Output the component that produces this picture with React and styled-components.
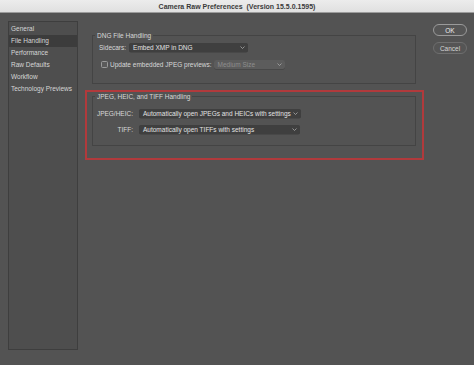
import { styled, createGlobalStyle } from "styled-components";

const GlobalStyle = createGlobalStyle`
  html, body {
    margin: 0;
    padding: 0;
    background: #535353;
  }
  * {
    box-sizing: border-box;
  }
`;

const Window = styled.div`
  width: 474px;
  height: 365px;
  background: #535353;
  font-family: "Liberation Sans", Arial, sans-serif;
  font-size: 6.5px;
  color: #dcdcdc;
  overflow: hidden;
`;

const TitleBar = styled.div`
  height: 13px;
  background: linear-gradient(#ececec, #e0e0e0);
  border-bottom: 1px solid #9c9c9c;
  display: flex;
  align-items: center;
  justify-content: center;
  font-size: 7px;
  font-weight: bold;
  color: #3a3a3a;
  white-space: pre;
`;

const Body = styled.div`
  display: flex;
  padding: 8px 7px 0 8px;
`;

const Sidebar = styled.div`
  width: 70px;
  height: 329px;
  background: #4e4e4e;
  border: 1px solid #3e3e3e;
  padding-top: 1px;
`;

const NavItem = styled.div`
  height: 12px;
  line-height: 12px;
  padding-left: 2px;
  color: #d6d6d6;
  background: ${(p) => (p.$active ? "#3c3c3c" : "transparent")};
  white-space: nowrap;
`;

const Content = styled.div`
  width: 324px;
  margin-left: 14px;
  padding-top: 10px;
`;

const Group = styled.fieldset`
  margin: 0;
  padding: 0 0 ${(p) => p.$bottom}px 0;
  border: 1px solid #444444;
  min-width: 0;
`;

const Legend = styled.legend`
  margin-left: 2px;
  padding: 0 2px;
  line-height: 9px;
  color: #d8d8d8;
`;

const Row = styled.div`
  display: flex;
  align-items: center;
  height: ${(p) => p.$h || 16}px;
  padding-left: ${(p) => p.$indent || 0}px;
  gap: ${(p) => p.$gap || 3}px;
`;

const Label = styled.span`
  color: #d8d8d8;
  white-space: nowrap;
`;

const Select = styled.div`
  width: ${(p) => p.$w}px;
  height: 9px;
  border-radius: 2px;
  background: ${(p) => (p.$disabled ? "#5c5c5c" : "#3f3f3f")};
  color: ${(p) => (p.$disabled ? "#8e8e8e" : "#e2e2e2")};
  display: flex;
  align-items: center;
  justify-content: space-between;
  padding: 0 3px 0 4px;
  white-space: nowrap;
  box-shadow: 0 0.5px 0 rgba(0, 0, 0, 0.25);
`;

const Checkbox = styled.span`
  width: 7px;
  height: 7px;
  border: 1px solid #9a9a9a;
  border-radius: 1.5px;
  background: #5a5a5a;
  flex: none;
`;

const Highlight = styled.div`
  margin: 6px -8px 0 -7px;
  padding: 0 6px 12px 5px;
  border: 2px solid #b13a3c;
`;

const FormGrid = styled.div`
  display: grid;
  grid-template-columns: 40px auto;
  column-gap: 6px;
  align-items: center;
  grid-auto-rows: 16px;
  padding-top: 4px;
  padding-bottom: 8px;
  justify-items: start;

  & > span {
    justify-self: end;
  }
`;

const Buttons = styled.div`
  display: flex;
  flex-direction: column;
  gap: 6px;
  margin-left: 17px;
  padding-top: 3px;
`;

const Button = styled.div`
  width: 34px;
  height: 12px;
  border-radius: 6px;
  border: 1px solid ${(p) => (p.$primary ? "#9a9a9a" : "#6e6e6e")};
  background: ${(p) => (p.$primary ? "#565656" : "#555555")};
  color: ${(p) => (p.$primary ? "#ececec" : "#d4d4d4")};
  display: flex;
  align-items: center;
  justify-content: center;
  font-size: 6.5px;
`;

const Chevron = () => (
  <svg width="5" height="3" viewBox="0 0 5 3">
    <path d="M0.5 0.5 L2.5 2.5 L4.5 0.5" fill="none" stroke="#a8a8a8" strokeWidth="0.8" />
  </svg>
);

const navItems = [
  "General",
  "File Handling",
  "Performance",
  "Raw Defaults",
  "Workflow",
  "Technology Previews",
];

export default function App() {
  return (
    <Window>
      <GlobalStyle />
      <TitleBar>Camera Raw Preferences  (Version 15.5.0.1595)</TitleBar>
      <Body>
        <Sidebar>
          {navItems.map((item) => (
            <NavItem key={item} $active={item === "File Handling"}>
              {item}
            </NavItem>
          ))}
        </Sidebar>

        <Content>
          <Group $bottom={10}>
            <Legend>DNG File Handling</Legend>
            <Row $indent={6} $h={15} $gap={3}>
              <Label>Sidecars:</Label>
              <Select $w={119}>
                Embed XMP in DNG
                <Chevron />
              </Select>
            </Row>
            <Row $indent={8} $h={18} $gap={2}>
              <Checkbox />
              <Label>Update embedded JPEG previews:</Label>
              <Select $w={71} $disabled>
                Medium Size
                <Chevron />
              </Select>
            </Row>
          </Group>

          <Highlight>
            <Group $bottom={0}>
              <Legend>JPEG, HEIC, and TIFF Handling</Legend>
              <FormGrid>
                <Label as="span">JPEG/HEIC:</Label>
                <Select $w={162}>
                  Automatically open JPEGs and HEICs with settings
                  <Chevron />
                </Select>
                <Label as="span">TIFF:</Label>
                <Select $w={161}>
                  Automatically open TIFFs with settings
                  <Chevron />
                </Select>
              </FormGrid>
            </Group>
          </Highlight>
        </Content>

        <Buttons>
          <Button $primary>OK</Button>
          <Button>Cancel</Button>
        </Buttons>
      </Body>
    </Window>
  );
}
